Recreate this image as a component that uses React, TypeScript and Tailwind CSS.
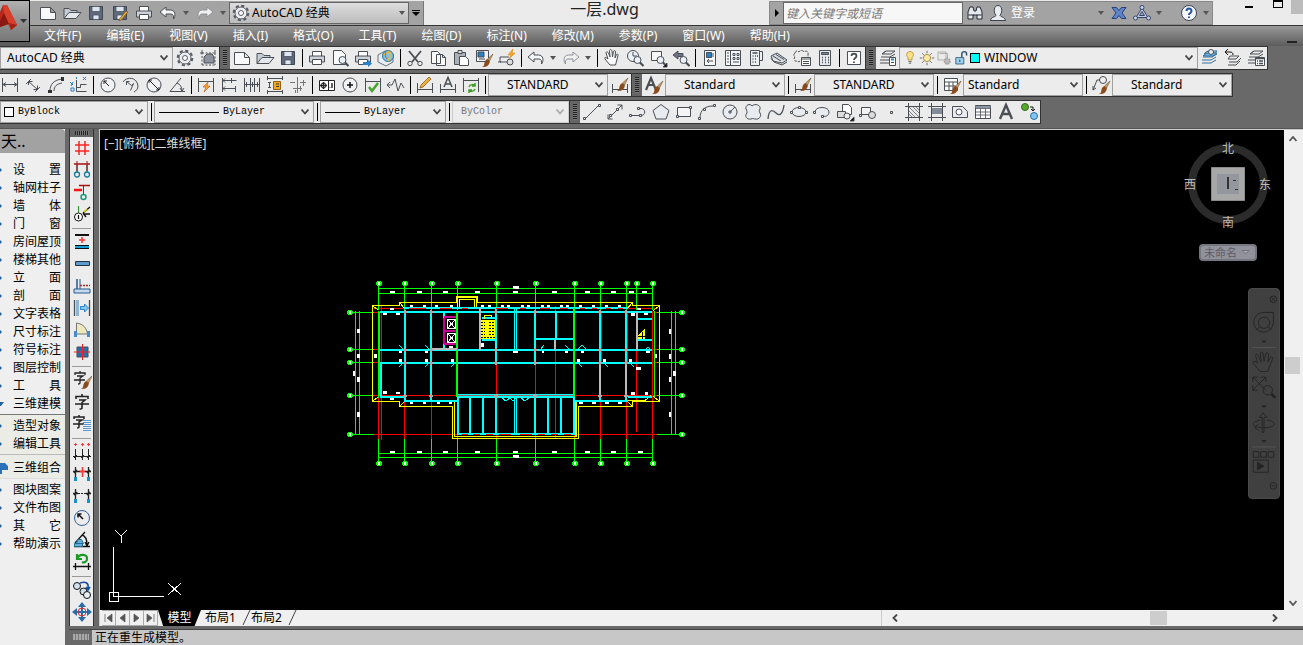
import { ReactNode } from "react";
import clsx from "clsx";

const C = "#4a4e55";
const BLUE = "#2b7fc4";

const brush = (
    <g stroke="none">
        <path d="M18 3l-5.500 5 2 2z" fill="#c9a26a" stroke="#6b5132" strokeWidth=".6" />
        <path d="M12.500 8l2.500 2.500c-1 4-3.500 6-8 5.500 2.500-1 2-2.500 2.500-4.500 .5-2 1.500-3 3-3.500z" fill="#8a4b1c" />
    </g>
);
const dims = <path d="M2.500 3v14M17.500 3v14M2.500 9.500h15M6 7.500l-3 2 3 2M14 7.500l3 2-3 2" />;
const page = <path d="M2.500 4.500h10l5 5v7h-15zM12.500 4.500v5h5" fill="#f8f9fb" />;
const folder = (
    <g>
        <path d="M2 15.500v-10h5l2 2h6v2" fill="#c5ccd6" />
        <path d="M2 15.500l5-6h12l-5 6z" fill="#e4e8ee" />
    </g>
);
const disk = (
    <g>
        <path d="M3.500 3.500h13v13h-13z" fill="#5f6b7c" stroke="#3d4654" />
        <path d="M6 3.500h8v5h-8zM7 12h6v4.500h-6z" fill="#dfe5ee" stroke="#3d4654" strokeWidth=".7" />
    </g>
);
const printer = (
    <g>
        <path d="M5.500 8v-4.500h9v4.500" fill="#fff" />
        <path d="M2.500 8h15v6h-15z" fill="#cdd1d8" />
        <path d="M5.500 11.500h9v5h-9z" fill="#fff" />
    </g>
);
const undo = <path d="M8 4l-6 5 6 5v-3h5c2 0 3 2 2.500 5 2.500-3 2-9-3-9h-4.500z" fill="#f4f5f7" />;
const redo = <path d="M12 4l6 5-6 5v-3h-5c-2 0-3 2-2.500 5-2.500-3-2-9 3-9h4.500z" fill="#f0f0f0" stroke="#8d9299" />;
const gear = (
    <g stroke="#565b63">
        <circle cx="10" cy="10" r="7.300" strokeWidth="2" strokeDasharray="3.200 2.530" />
        <circle cx="10" cy="10" r="6" fill="#eceef1" />
        <circle cx="10" cy="10" r="2.500" fill="#fff" />
    </g>
);
const layers = <path d="M5 5l3-2h9l-4 3h-9l4-3M3 9h9l5-3M2 12h9l5-3M2 15h9l5-3" fill="none" />;
const zoomLens = (
    <g>
        <circle cx="12.500" cy="12" r="3.500" fill="#eaf1f8" />
        <path d="M15 14.500l3.500 3.500" strokeWidth="2.200" />
    </g>
);

const icons: Record<string, ReactNode> = {
    new: page,
    open: folder,
    save: disk,
    saveAs: <g>{disk}<path d="M18 9l-7 8-2 1 .5-2 6.500-8z" fill="#f0b23c" stroke="#7a5418" strokeWidth=".8" /></g>,
    print: printer,
    undo,
    redo,
    gear,
    snapBox: (
        <g>
            <path d="M4 5h13M4 17V5M17 5v12M4 17h13" strokeDasharray="2 1.500" />
            <path d="M6 15V9l3-3h5l2 3v6z" fill="#8c939e" />
            <path d="M2 5h3M4 2v3M17 2v3" stroke={C} />
        </g>
    ),
    preview: <g><path d="M3.500 2.500h8l4 4v10h-12z" fill="#fafbfc" />{zoomLens}</g>,
    publish: <g>{printer}<path d="M10 14h5v-2l4 3.500-4 3.500v-2h-5z" fill={BLUE} stroke="none" /></g>,
    print3d: (
        <g>
            <path d="M2 7l7-4 8 3v8l-7 4-8-4z" fill="#e7edf2" stroke="#66717c" />
            <circle cx="12" cy="8" r="5.500" fill="#7cc3e6" stroke="#2a6f99" />
            <path d="M8 7c2-3 5-3 8-1M12 3c3 3 3 7 0 10" stroke="#f0b830" strokeWidth="1.500" />
            <path d="M10 4c-1 2-1 5 1 7" stroke="#d84b2a" />
        </g>
    ),
    cut: <g><path d="M4 3l9 11M16 3L7 14" strokeWidth="1.800" /><circle cx="5" cy="15.500" r="2.200" /><circle cx="15" cy="15.500" r="2.200" /></g>,
    copy: <path d="M3.500 3.500h6l3 3v9h-9zM8.500 6.500h6l3 3v8h-9zM14.500 6.500v3h3" fill="#fafafa" />,
    paste: <g><path d="M3.500 4.500h11v12h-11z" fill="#a9b0ba" /><path d="M7 2.500h4v3h-4z" fill="#ddd" /><path d="M8.500 8.500h6l3 3v6h-9z" fill="#fff" /></g>,
    match: <g><path d="M2.500 2.500h12v11h-12z" fill="#eef2f6" /><path d="M4 4h6v5h-6z" fill={BLUE} /><path d="M5 11h6" /><g transform="translate(1 3)">{brush}</g></g>,
    block: <g><path d="M3 9h9M3 9v5h7M1 14h3" /><circle cx="13" cy="14" r="3" fill="#ddd" /><path d="M16 1l-5 6h3l-2 4 6-6h-3z" fill="#f7a823" stroke="#d98a10" strokeWidth=".6" /></g>,
    pan: <path d="M8 17l-5-6c-1-2 1-2 3 0l-2-6c0-2 2-1 2.500 0l1.500 4-.5-6c0-2 2-2 2.500 0l.5 6 1-5.500c.5-1.500 2-1 2 .5l-.5 6 1.500-3.500c1-1 2 0 1.500 1l-2.500 9.500z" fill="#fafafa" />,
    zoomRt: <g><circle cx="8" cy="8" r="5.500" fill="#eaf1f8" /><path d="M8 4v4h4" />{zoomLens}</g>,
    zoomWin: <g><path d="M3.500 3.500h10v9h-10z" fill="#f7f7f7" />{zoomLens}<path d="M19 15v4h-4z" fill="#000" /></g>,
    zoomPrev: <g><path d="M7 3l-5 4 5 4v-2.500h5v-3h-5z" fill="#6b7280" />{zoomLens}</g>,
    props: <g><path d="M4.500 2.500h11v15h-11z" fill="#f5f7f9" /><path d="M6.500 4.500h5v5h-5z" fill={BLUE} /><path d="M7 13h6M9 11l-2 2 2 2M13 5v4" /></g>,
    dcenter: <g><path d="M2.500 2.500h15v15h-15z" fill="#f5f7f9" /><path d="M7.500 2.500v15M4 5h2M4 8h2M4 11h2M4 14h2M10 5.500h2v2h-2zM14 5.500h2v2h-2zM10 9.500h2v2h-2zM14 9.500h2v2h-2zM10 14h6" /></g>,
    palettes: <g><path d="M4.500 2.500h9v15h-9zM13.500 3.500h3v9h-3z" fill="#eceff2" /><path d="M6.500 5h5M6.500 8h1M9 8h1M11 8h1M6.500 11h1M9 11h1M6.500 14h1M9 14h1" strokeWidth="1.600" /></g>,
    sheets: <path d="M2 8l6-3 10 7-5 3-9-2zM2 10.500l3 3.500 8 3 5-3M4 8l8 5M7 6.500l8 5" fill="#d5d9e0" />,
    markup: <g><path d="M3 5c1-3 3-2 4-1 1-2 4-2 5 0 2-2 5 0 4 2v3M3 5c-2 2-1 4 0 4-2 2 0 5 2 4 1 1 2 1 3 0" strokeDasharray="3 1" /><path d="M9.500 9.500h9v8h-9z" fill="#fff" /><path d="M9.500 11h9M11 13.500h6M11 15.500h6" /></g>,
    calc: <g><path d="M4.500 2.500h11v15h-11z" fill="#e6eaee" /><path d="M6.500 4.500h7v2h-7z" fill="#7e8894" /><path d="M7 9.500h1M10 9.500h1M13 9.500h1M7 12h1M10 12h1M13 12h1M7 14.500h1M10 14.500h1M13 14.500h1" strokeWidth="1.500" /></g>,
    help: <g><path d="M3.500 3.500h13v13h-13z" fill="#fff" /><path d="M7.500 8c0-3 5-3 5 0 0 2-2.500 2-2.500 4M10 13.500v1.500" strokeWidth="1.800" /></g>,
    layerProps: <g>{layers}<path d="M11.500 9.500h6v8h-6z" fill="#fff" /><path d="M13 11.500h3" stroke={BLUE} strokeWidth="2" /><path d="M13 14.500h3" /></g>,
    layerCur: <g stroke="#356f9c">{layers}<path d="M3 8h10l4-3h-10z" fill="#6db9ea" /><circle cx="11" cy="4" r="2.500" fill="#eee" stroke={C} /></g>,
    layerPrev: <g><path d="M7 8h9l-3 3h-8zM6 14h8l4-4M5 17h8l4-4" /><path d="M2 4h5c2 0 3 1 3 3M5 1L2 4l3 3" stroke="#111" /></g>,
    layerState: <g>{layers}<path d="M9.500 9.500h9v8h-9z" fill="#fff" /><path d="M9.500 10.500h9M11 13h1M13 13h4M11 15.500h1M13 15.500h4" strokeWidth="1.300" /></g>,
    bulb: <g><path d="M10 2c5 0 5 5 2.500 7.500v3h-5v-3c-2.500-2.500-2.500-7.500 2.500-7.500z" fill="#ffe08a" stroke="#b48a2a" /><path d="M8 14.500h4M8.500 16.500h3" /></g>,
    sun: <g><path d="M10 1v3M10 16v3M1 10h3M16 10h3M4 4l2 2M14 14l2 2M16 4l-2 2M4 16l2-2" /><circle cx="10" cy="10" r="4.500" fill="#fce9a7" stroke="#9c7a2a" /></g>,
    vpFreeze: <g stroke="#a0a0a0"><path d="M2.500 2.500h10v10h-10zM4.500 4.500h10v6" /><circle cx="14" cy="14" r="3.500" fill="#bbb" strokeDasharray="2 1" strokeWidth="2" /></g>,
    unlock: <g><path d="M3.500 9.500h10v8h-10z" fill="#9ed0f0" stroke="#24506e" /><path d="M11 9V5c0-4 6-4 6 0v2" stroke="#24506e" strokeWidth="1.800" /><path d="M8.500 12v3" stroke="#123" /></g>,
    // dimension tools
    linear: dims,
    aligned: <path d="M3 9l5-5M12 17l5-5M5.500 6.500l9 8M5.500 10V6.500h4M14.500 10.500v4h-4" />,
    arcLen: <g><path d="M4 16c0-7 4-11 12-12M8 16c0-5 3-7 8-8" /><path d="M2 15h4v3h-4zM15 2h3v4h-3z" fill="#333" stroke="none" /></g>,
    ordinate: <g><path d="M7.500 5v11.500h10M7.500 12.500h4v-3h6" /><path d="M7.500 2v2M17 2l-3 3M14 2l3 3M1 7l3 3M4 7l-2 4M2 16h3v-3h-3z" stroke={BLUE} /></g>,
    radius: <g><circle cx="10" cy="10" r="7" fill="#f0f2f4" /><path d="M11 11L6 6M6 9V6h3" stroke="#222" /></g>,
    jogged: <path d="M2 7c4-6 14-5 15 4 0 3-2 5-4 6M5.500 6.500l5 4 2-2-3 7M5.500 10V6.500h3" />,
    diameter: <g><circle cx="10" cy="10" r="7" fill="#f0f2f4" /><path d="M5 5l10 10M5 8V5h3M15 12v3h-3" stroke="#222" /></g>,
    angular: <path d="M18 16.500H3L14 3M10 8c3 1 5 4 5 8M13 13l2 3 2-3" />,
    quick: <g><path d="M2.500 3v14M17.500 3v14M2.500 6.500h15" /><path d="M12 7l-5 5h3l-2 5 6-6h-3z" fill="#f7a823" stroke="#c5521c" strokeWidth=".6" /></g>,
    baseline: <path d="M3.500 3v14M12.500 3v5M16.500 11v6M3.500 5.500h14M3.500 13.500h13M6 3.500l-2 2 2 2M6 11.500l-2 2 2 2" />,
    contin: <path d="M2.500 3v14M8.500 3v14M12.500 3v14M17.500 3v14M2.500 9.500h15M4.500 7v5M10.500 7v5M15.500 7v5" />,
    spaceD: <g><path d="M2 3.500h16M2 16.500h16M2.500 1v4M17.500 1v4M2.500 15v4M17.500 15v4M4.500 7v6M3 7.500h3M3 12.500h3" /><path d="M8.500 6.500h7v8h-7z" fill="#f7a823" stroke="#946012" /><path d="M11 9h3M11 11.500h3" stroke="#333" /></g>,
    breakD: <path d="M2 7.500h5M12 7.500h6M9.500 2v16M5 13.500h9M15.500 5v6M7.500 15v3M12.500 11v5" stroke="#777" />,
    toler: <g><path d="M2.500 5.500h15v10h-15zM11.500 5.500v10" fill="#fff" stroke="#222" /><circle cx="6.500" cy="10.500" r="2.500" stroke="#222" /><path d="M3 10.500h7M6.500 7v7M15 8v5M13 13v-.5" stroke="#222" strokeWidth="1.400" /></g>,
    center: <g><circle cx="10" cy="10" r="7" fill="#f0f2f4" /><path d="M7 10h6M10 7v6" stroke="#111" strokeWidth="1.500" /></g>,
    inspect: <g><path d="M2.500 3v14M17.500 3v14M2.500 6.500h15" /><path d="M6 12l3 4 6-8" stroke="#46a32c" strokeWidth="2.500" /></g>,
    jogLine: <path d="M1 10h5M4 7L1 10l3 3M6 10l3-6 3 12 3-8 3 5" />,
    dimEdit: <g><path d="M2.500 8v10M17.500 8v10M2.500 14.500h15" /><path d="M14 2l-8 8-1 3 3-1 8-8z" fill="#f0b23c" stroke="#8a5a14" strokeWidth=".8" /></g>,
    dimText: <g><path d="M2.500 9v9M17.500 9v9M2.500 14.500h15" /><path d="M6 12L10 2.500l4 9.500M7.500 9h5" strokeWidth="1.500" /></g>,
    dimUpd: <g><path d="M2.500 3v14M17.500 3v14M2.500 5.500h15" /><path d="M8 12c1-3 5-3 6-1M14 14c-1 3-5 3-6 1M14 8v3h-3M8 18v-3h3" stroke="#3f9c27" strokeWidth="1.500" /></g>,
    dimStyle: <g><path d="M2.500 9v9M17.500 9v9M2.500 14.500h15" />{brush}</g>,
    textStyle: <g><path d="M2 15L7 3l5 12M4 10h6" strokeWidth="2.200" /><g transform="translate(1 3)">{brush}</g></g>,
    tableStyle: <g><path d="M2.500 3.500h13v12h-13zM2.500 7h13M2.500 11h13M7 7v8.500M11 7v8.500" fill="#fff" /><g transform="translate(1 3)">{brush}</g></g>,
    leader: <g><circle cx="12" cy="5" r="3.500" fill="#eee" /><path d="M9 5H6L2 15M2 11v4l3-2" /><g transform="translate(1 3)">{brush}</g></g>,
    // draw tools
    line: <g><path d="M3 17L17 3" /><path d="M1.500 15.500h2v2h-2zM16.500 2.500h2v2h-2z" fill="#eee" /></g>,
    xline: <g><path d="M3 17L17 3M12.500 3H17v4.500M3 12.500V17h4.500" /><path d="M4.500 12.500h2v2h-2zM11.500 6.500h2v2h-2z" fill="#eee" /></g>,
    pline: <g><path d="M4 13.500h9c5 0 5-7 0-7h-2" /><path d="M1.500 12.500h2v2h-2zM11.500 12.500h2v2h-2zM9.500 5.500h2v2h-2z" fill="#eee" /></g>,
    polygon: <path d="M10 2.500l8 6-3 8.500h-10l-3-8.500z" fill="#e8ebef" />,
    rect: <g><path d="M3.500 5.500h13v9h-13z" fill="#f4f4f4" /><path d="M2.500 13.500h2v2h-2zM15.500 4.500h2v2h-2z" fill="#eee" /></g>,
    arc: <g><path d="M3 16c0-8 5-12 13-12" /><path d="M1.500 15.500h2v2h-2zM6.500 6.500h2v2h-2zM16.500 2.500h2v2h-2z" fill="#eee" /></g>,
    circle: <g><circle cx="10" cy="10" r="7" fill="#e8ebef" /><path d="M10 10l5-5M9 9h2v2h-2z" /></g>,
    cloud: <path d="M9 4c-2-3-7-1-6 3 1 2 1 2 1 4-3 3 0 7 4 6 2-1 3 0 4 0 4 1 7-3 5-6-1-2-1-2 0-4 1-4-5-6-8-3z" fill="#e8ebef" />,
    spline: <path d="M2 17c1-11 5-9 8-6 4 4 7 0 8-8" strokeWidth="1.300" />,
    ellipse: <g><ellipse cx="10" cy="10" rx="7" ry="4.500" fill="#e8ebef" /><path d="M1.500 9.500h2v2h-2zM16.500 9.500h2v2h-2zM9.500 4.500h2v2h-2z" fill="#fff" /></g>,
    ellArc: <g><path d="M3 10c0-6 14-6 14 0 0 4-4 5-6 4" fill="#e8ebef" /><path d="M1.500 9.500h2v2h-2zM9.500 13.500h2v2h-2z" fill="#fff" /></g>,
    insert: <g><path d="M7.500 2.500h6l3 3v7h-9z" fill="#fff" /><path d="M2.500 9.500h8v6h-8z" fill="#ddd" /><circle cx="12" cy="14" r="3" fill="#eee" /><path d="M19 15v4h-4z" fill="#000" /></g>,
    makeBlk: <g><path d="M3.500 5.500h9v7h-9z" fill="#f4f4f4" /><circle cx="14" cy="13" r="3.500" fill="#ddd" /><path d="M1.500 12.500h2v2h-2z" fill="#eee" /></g>,
    point: <path d="M9.500 9.500h2v2h-2z" />,
    hatch: <g><path d="M4.500 1v18M15.500 1v18M1 4.500h18M1 15.500h18" /><path d="M5 9l6 6M5 5l10 10M9 5l6 6M5 12l3 3M12 5l3 3" strokeWidth=".7" /></g>,
    gradient: <g><path d="M4.500 1v18M15.500 1v18M1 4.500h18M1 15.500h18" /><path d="M5 6h10v6h-10z" fill="#838b96" stroke="none" /></g>,
    region: <g><path d="M2.500 4.500h10l5 5v6h-15z" fill="#e8ebef" /><circle cx="9" cy="10" r="3" fill="#fff" /></g>,
    table: <g><path d="M2.500 3.500h15v13h-15z" fill="#fff" /><path d="M2.500 4h15v2h-15z" fill="#8a94a2" stroke="none" /><path d="M2.500 6.500h15M2.500 10h15M2.500 13h15M7.500 7v9.500M12.500 7v9.500" strokeWidth=".8" /></g>,
    mtext: <path d="M4 17L10 3l6 14M6.500 12h7" strokeWidth="2.400" />,
    addSel: <g><circle cx="6" cy="5" r="3.500" fill="#59a832" stroke="#2e6c14" /><circle cx="15" cy="14" r="3.500" fill="#84c4f0" stroke="#2a6f99" /><path d="M11 5h3v4M12 7l2 2 2-2" stroke="#111" /></g>,
    binoc: <g><path d="M3 16V9l2-5h3l1 4h2l1-4h3l2 5v7h-5v-4h-4v4z" fill="#e6e8ea" stroke="#222b3a" /><path d="M3.500 12h5M11.500 12h5" stroke="#222b3a" /></g>,
    user: <g stroke="#39404a"><path d="M2.500 17.500c1-4 4-3 5.500-5-3-4-2-10 2-10s5 6 2 10c1.500 2 4.500 1 5.500 5z" fill="#e9ecf0" /></g>,
    exchange: <g stroke="#27407c"><path d="M3 4.500h4.500l2.500 3 2.500-3h4.500l-4 5.500 4 5.500h-4.500l-2.500-3-2.500 3h-4.500l4-5.500z" fill="#5f84c8" /></g>,
    triad: <g stroke="#33456f"><path d="M10 5l6 9.500h-12z" fill="#c5cbe0" /><path d="M10 8.500l2.500 4h-5z" fill="#a3a3a3" /><circle cx="10" cy="4.500" r="2" fill="#cdd6ea" /><circle cx="3.500" cy="15" r="2" fill="#cdd6ea" /><circle cx="16.500" cy="15" r="2" fill="#cdd6ea" /></g>,
    helpRound: <g stroke="#3c4452"><circle cx="10" cy="10" r="7.500" fill="#f5f7fa" /><path d="M7.500 8c0-3.500 5-3.500 5 0 0 2-2.500 2-2.500 4M10 13.500v1.500" stroke="#2456a8" strokeWidth="2" /></g>,
    // vertical toolbar
    grid: <path d="M7 3v14M13 3v14M3 7h14M3 13h14" stroke="#f22" strokeWidth="1.500" />,
    axis: <g><path d="M2 4h16" stroke="#a11" strokeWidth="1.500" /><path d="M5 1v10M15 1v10" stroke="#a11" /><path d="M5 5v7M15 5v7" stroke="#333" /><circle cx="5" cy="14.500" r="2.500" stroke="#167d9a" strokeWidth="1.300" /><circle cx="15" cy="14.500" r="2.500" stroke="#167d9a" strokeWidth="1.300" /></g>,
    axisAdd: <g><path d="M7 3.500h11" stroke="#a11" strokeWidth="1.500" /><path d="M2 8h8" stroke="#f11" strokeWidth="2.500" /><path d="M11.500 3v9" stroke="#a11" /><circle cx="11.500" cy="15" r="2.500" stroke="#1a9a7a" strokeWidth="1.500" /></g>,
    axisNo: <g stroke="#111"><path d="M6.500 2v7" stroke="#292" /><circle cx="6.500" cy="13" r="4" fill="#fff" /><path d="M6.500 11v4M11 9l7-6M11 10h7M11 9l3 4" strokeWidth="1.300" /><path d="M12 8l3-3" stroke="#dd0" strokeWidth="1.500" /></g>,
    wall: <g stroke="none"><path d="M3 2h14v2h-14zM3 13h14v1h-14zM3 16h14v1h-14z" fill="#111" /><path d="M3 14h14v2h-14z" fill="#19a0d8" /><path d="M10 5v6M7 8h6" stroke="#f33" strokeWidth="1.500" /></g>,
    wallBar: <path d="M3.500 7.500h14v4h-14z" fill="#5d9bd0" stroke="#234" />,
    wallJoin: <g stroke="#27588a"><path d="M5 3v10h13v4H2v-4h3zM8 3v10" fill="#c5daee" /><path d="M8 9.500h10" stroke="#b22" strokeDasharray="2 1" strokeWidth="1.500" /></g>,
    offset: <g><path d="M2.500 2v16M17.500 2v16" strokeWidth="1.300" /><path d="M4 2h3v16h-3z" fill="#8db7d5" stroke="none" /><path d="M8.500 8.500h4v-2.500l4 4-4 4v-2.500h-4z" fill="#80caf2" stroke={BLUE} /></g>,
    door: <g><path d="M4.500 14V3c7 1 10 5 11 11z" fill="#eee9bd" stroke="#777" /><path d="M2 11h3v6h-3zM15 11h3v6h-3z" fill="#4a88cc" stroke="none" /></g>,
    column: <g><path d="M5 5h11v10h-11z" fill="#286eac" /><path d="M10.500 2v16M2 10h16" stroke="#e22" /></g>,
    char: <path d="M10 2v2M4 7V4.500h12V7M7 8h6l-3 2.500V16c0 1-1 1-2.500 1M3 12h14" stroke="#222" strokeWidth="1.600" />,
    charBrush: <g stroke="#222"><path d="M8 1v2M3 5V3h10v2M5 6h6L8 8v5c0 1-1 1-2 1M2 10h11" strokeWidth="1.300" /><g transform="translate(2 3)">{brush}</g></g>,
    charList: <g stroke="#222"><path d="M7 1v2M2 5V3h10v2M4 6h6L7 8v5c0 1-1 1-2 1M1 10h11" strokeWidth="1.500" /><path d="M11 6.500h8M11 8.500h8M11 10.500h8M11 12.500h8M11 14.500h8M11 16.500h8" stroke="#5c97d4" /></g>,
    dimA: <g stroke="#222"><path d="M3.500 7v11M10.500 7v11M16.500 7v11M1 14.500h18M2 16l3-3M9 16l3-3M15 16l3-3" /><path d="M2 2.500h3M9 2.500h3M15 2.500h3M3.500 1v3M10.500 1v3M16.500 1v3" stroke="#f33" /></g>,
    dimB: <g stroke="#222"><path d="M3.500 3v10M16.500 3v10M1 7.500h18M2 9l3-3M15 9l3-3" strokeWidth="1.300" /><path d="M10.500 3v10M8 7.500h5" stroke="#f33" strokeWidth="1.500" /><path d="M2 13h3v4h-3zM15 13h3v4h-3z" fill="#1c8fc4" stroke="none" /></g>,
    dimC: <g stroke="#222"><path d="M3.500 3v10M16.500 3v10M1 7.500h5M14 7.500h5M2 9l3-3M15 9l3-3" strokeWidth="1.300" /><path d="M6 7.500h8" strokeDasharray="2 1" /><path d="M2 13h3v4h-3zM15 13h3v4h-3z" fill="#1c8fc4" stroke="none" /></g>,
    radiusV: <g><circle cx="10" cy="10" r="7.500" stroke="#2d619c" /><path d="M11 11L6 6M6 9.500V6h3.500" stroke="#111" strokeWidth="1.500" /></g>,
    angleV: <g stroke="#111"><path d="M2 16.500h16M3 13L13 2M10 5c4 1 5 4 5 10M13 12l2 4 2-4" strokeWidth="1.300" /><path d="M2.500 13.500h8v3h-8zM5.500 9.500h4l2 4h-7z" fill="#69acd0" stroke="#1c6e92" /></g>,
    turn: <g><path d="M5 2v5h5M5 7c2-6 11-5 10 0 0 3-3 4-5 3" stroke="#1a9a22" strokeWidth="2.200" /><path d="M3.500 11v7M16.500 11v7M1 14.500h18" stroke="#111" strokeWidth="1.300" /></g>,
    copyV: <g stroke="#111"><circle cx="5" cy="6" r="3.500" fill="#cfe0ef" /><circle cx="11.500" cy="11.500" r="3.500" fill="#cfe0ef" /><circle cx="15" cy="15" r="3.500" fill="#e8eef4" /><path d="M8 3c6-2 9 0 8 6M14 7l2 3 2-3" stroke="#1a4d9c" strokeWidth="1.600" /></g>,
    moveV: <g><path d="M10 2v16M2 10h16" stroke="#296cab" strokeWidth="2" /><path d="M10 0l4 5h-8zM10 20l4-5h-8zM0 10l5-4v8zM20 10l-5-4v8z" fill="#296cab" stroke="none" /><circle cx="10" cy="10" r="4" stroke="#e33" /></g>,
};

const Icon = ({ name, className = "size-5" }: { name: string; className?: string }) => (
    <svg viewBox="0 0 20 20" className={clsx("shrink-0", className)} fill="none" stroke={C} strokeWidth="1" aria-hidden="true">
        {icons[name]}
    </svg>
);

const Tool = ({ name }: { name: string }) => (
    <button aria-label={name} className="flex h-full w-[23px] shrink-0 items-center justify-center">
        <Icon name={name} />
    </button>
);

// "|" is a separator, "v" a small drop-down arrow
const Tools = ({ list }: { list: string }) => (
    <>
        {list.split(" ").map((name, i) => {
            if (name === "|") return <Sep key={i} />;
            if (name === "v") return <Caret key={i} />;
            return <Tool key={i} name={name} />;
        })}
    </>
);

const Sep = () => (
    <div className="flex w-1.5 shrink-0 justify-center py-0.5">
        <div className="w-px bg-black" />
    </div>
);

const Caret = () => (
    <button aria-label="More" className="flex w-3 shrink-0 items-center justify-center">
        <svg viewBox="0 0 6 4" className="h-1 w-1.5" fill="#555"><path d="M0 0h6l-3 4z" /></svg>
    </button>
);

const Bar = ({ grip, children }: { grip?: boolean; children: ReactNode }) => (
    <div className="flex h-6 shrink-0 items-stretch border-y border-r border-[#333] bg-[#ebebeb]">
        {grip && (
            <div className="flex w-2.5 items-center justify-center bg-[#666]">
                <div className="h-4 w-1 bg-[repeating-linear-gradient(#222_0_1px,#777_1px_2px)]" />
            </div>
        )}
        {children}
    </div>
);

interface ComboProps {
    label: string;
    value: string;
    className: string;
    selectClass?: string;
    disabled?: boolean;
    children?: ReactNode;
}

const Combo = ({ label, value, className, selectClass, disabled, children }: ComboProps) => (
    <div className={clsx("relative flex shrink-0 items-center border border-[#a0a0a0] bg-[#ececec]", className)}>
        {children}
        <select
            aria-label={label}
            disabled={disabled}
            className={clsx("h-full min-w-0 flex-1 appearance-none bg-transparent leading-5 outline-none", disabled ? "text-[#777]" : "text-black", selectClass)}
        >
            <option>{value}</option>
        </select>
        <svg viewBox="0 0 8 6" className="pointer-events-none absolute right-1 h-1.5 w-2" fill="none" stroke={disabled ? "#aaa" : "#444"} strokeWidth="1.800">
            <path d="M.5 .5l3.500 4 3.500-4" />
        </svg>
    </div>
);

const mono = "font-['Liberation_Mono','Noto_Sans_CJK_SC',monospace] text-[10px]";

const menus = ["文件(F)", "编辑(E)", "视图(V)", "插入(I)", "格式(O)", "工具(T)", "绘图(D)", "标注(N)", "修改(M)", "参数(P)", "窗口(W)", "帮助(H)"];

const TitleBar = () => (
    <header className="flex bg-[#ebebeb]">
        <div className="shrink-0 bg-[#5c5c5c]">
            <button aria-label="Application menu" className="flex h-[42px] w-[30px] items-center border border-l-0 border-black bg-gradient-to-b from-[#b0b0b0] to-[#777]">
                <svg viewBox="0 0 28 40" className="h-10 w-7">
                    <path d="M3 4h4l10 20-6 5-3-6-8 3V11z" fill="#b8261a" />
                    <path d="M3 4h4l10 20-6 5L4 12z" fill="#d8402d" />
                    <path d="M4 12l5 11-9 3v-6z" fill="#8a1a11" />
                    <path d="M9 22l8 2-6 5z" fill="#a52015" />
                    <path d="M20 18h7l-3.500 4z" fill="#333" />
                </svg>
            </button>
        </div>
        <div className="min-w-0 flex-1">
            <div className="flex h-[25px]">
                <div className="mt-px flex items-center border-r border-[#777] bg-[#a3a3a3] pl-1.5">
                    <div className="flex h-full items-center gap-px">
                        <Tools list="new open save saveAs print undo v redo v" />
                    </div>
                    <button className="flex h-[22px] w-[180px] items-center border border-[#666] bg-gradient-to-b from-[#ddd] to-[#bdbdbd] pl-px">
                        <Icon name="gear" />
                        <span className="ml-px flex-1 text-left">AutoCAD 经典</span>
                        <Caret />
                    </button>
                    <button aria-label="Customize" className="flex w-[14px] justify-center">
                        <svg viewBox="0 0 8 6" className="h-1.5 w-2"><path d="M0 0h8v1H0zM0 2h8l-4 4z" /></svg>
                    </button>
                </div>
                <h1 className="flex-1 pl-4 text-center text-base leading-[18px] text-[#222]">一层.dwg</h1>
                <div className="mt-px flex items-center border border-[#888] bg-[#a3a3a3]">
                    <button aria-label="Expand" className="flex w-[13px] justify-center">
                        <svg viewBox="0 0 4 8" className="h-2 w-1"><path d="M0 0l4 4-4 4z" /></svg>
                    </button>
                    <input aria-label="Search" placeholder="键入关键字或短语" className="h-[22px] w-[180px] border border-[#666] bg-[#f7f7f7] px-0.5 italic outline-none placeholder:text-[#777]" />
                    <Tools list="binoc user" />
                    <button className="ml-0.5 w-[84px] text-left text-white">登录</button>
                    <Caret />
                    <Tools list="exchange triad" />
                    <Caret />
                    <div className="w-3" />
                    <Tool name="helpRound" />
                    <Caret />
                </div>
                <div className="flex w-[90px] items-start justify-end">
                    <button aria-label="Minimize" className="mt-1.5 mr-5 h-0.5 w-2 bg-black" />
                    <button aria-label="Restore" className="mr-2 h-2 w-2.5 border border-t-2 border-black" />
                    <button aria-label="Close" className="h-3.5 w-3 bg-[#bcbcbc]" />
                </div>
            </div>
            <nav className="flex h-[21px] items-center gap-[25px] border-t border-[#333] bg-gradient-to-b from-[#999] to-[#5c5c5c] pl-3.5 text-white">
                {menus.map((m) => (
                    <button key={m} className="whitespace-nowrap leading-5">{m}</button>
                ))}
                <button aria-label="Minimize drawing" className="mt-3 mr-1.5 ml-auto h-0.5 w-2.5 bg-[#222]" />
            </nav>
        </div>
    </header>
);

const Toolbars = () => (
    <div className="flex flex-col gap-[3px] pb-1">
        <div className="flex">
            <Bar>
                <Combo label="Workspace" value="AutoCAD 经典" className="w-[173px]" selectClass="pl-1.5" />
                <Tools list="gear snapBox" />
            </Bar>
            <Bar grip>
                <Tools list="new open save | print preview publish print3d | cut copy paste match block | undo v redo v | pan zoomRt zoomWin zoomPrev | props dcenter palettes sheets markup calc | help" />
            </Bar>
            <Bar grip>
                <Tool name="layerProps" />
                <Combo label="Layer" value="WINDOW" className="w-[299px]" selectClass="pl-1">
                    <div className="flex gap-px pl-0.5">
                        <Icon name="bulb" className="size-4" />
                        <Icon name="sun" className="size-4" />
                        <Icon name="vpFreeze" className="size-4" />
                        <Icon name="unlock" className="size-4" />
                    </div>
                    <div className="ml-px size-2.5 border border-black bg-[#00ffff]" />
                </Combo>
                <Tools list="layerCur layerPrev layerState" />
            </Bar>
        </div>
        <div className="flex">
            <Bar>
                <div className="-ml-0.5 flex">
                    <Tools list="linear aligned arcLen ordinate | radius jogged diameter angular | quick baseline contin spaceD breakD | toler center inspect jogLine | dimEdit dimText dimUpd |" />
                </div>
                <Combo label="Dimension style" value="STANDARD" className="w-[120px]" selectClass="pl-[18px]" />
                <Tool name="dimStyle" />
            </Bar>
            <Bar grip>
                <Tool name="textStyle" />
                <Combo label="Text style" value="Standard" className="w-[120px]" selectClass="pl-[18px]" />
                <Sep />
                <Tool name="dimStyle" />
                <Combo label="Dimension style 2" value="STANDARD" className="w-[120px]" selectClass="pl-[18px]" />
                <Sep />
                <Tool name="tableStyle" />
                <Combo label="Table style" value="Standard" className="w-[120px]" selectClass="pl-1" />
                <Sep />
                <Tool name="leader" />
                <Combo label="Leader style" value="Standard" className="w-[120px]" selectClass="pl-[18px]" />
            </Bar>
        </div>
        <div className="flex">
            <Bar>
                <Combo label="Color" value="ByBlock" className="w-[148px]" selectClass={clsx(mono, "pl-1")}>
                    <div className="ml-[3px] size-2.5 border border-black bg-white" />
                </Combo>
                <Sep />
                <Combo label="Linetype" value="ByLayer" className="w-[160px]" selectClass={clsx(mono, "pl-1")}>
                    <div className="ml-1 h-px w-[60px] bg-black" />
                </Combo>
                <Sep />
                <Combo label="Lineweight" value="ByLayer" className="w-[126px]" selectClass={clsx(mono, "pl-1")}>
                    <div className="ml-1 h-px w-[35px] bg-black" />
                </Combo>
                <Sep />
                <Combo label="Plot style" value="ByColor" disabled className="w-[117px] border-[#ccc]" selectClass={clsx(mono, "pl-2")} />
            </Bar>
            <Bar grip>
                <Tools list="line xline pline polygon rect arc circle cloud spline ellipse ellArc insert makeBlk point hatch gradient region table mtext addSel" />
            </Bar>
        </div>
    </div>
);

const paletteGroups = [
    ["设　　置", "轴网柱子", "墙　　体", "门　　窗", "房间屋顶", "楼梯其他", "立　　面", "剖　　面", "文字表格", "尺寸标注", "符号标注", "图层控制", "工　　具", "三维建模"],
    ["造型对象", "编辑工具"],
    ["三维组合"],
    ["图块图案", "文件布图", "其　　它", "帮助演示"],
];

const Palette = () => (
    <aside className="w-[65px] shrink-0 overflow-hidden bg-[#efefef]">
        <div className="h-6 rounded-tr bg-[#a2a2a2] pl-px text-base leading-6 text-black">天..</div>
        <div className="pt-2">
            {paletteGroups.map((group, g) => (
                <div key={g} className={clsx("pb-px", g > 0 && "border-t pt-0.5", g === 1 && "border-[#777] bg-[#ecece6]", g === 2 && "border-[#bbb] bg-[#ecece6] pt-1", g === 3 && "border-[#ddd]")}>
                    {group.map((item) => (
                        <button key={item} className="flex h-[18px] w-full items-center whitespace-nowrap text-black">
                            <svg viewBox="0 0 13 12" className="h-3 w-[13px] shrink-0">
                                {item === "三维组合" ? (
                                    <path d="M0 1h5l3 3v4H2v4H0z" fill="#2a72b8" />
                                ) : item === "三维建模" ? (
                                    <path d="M0 4h4L1 8H0z" fill="#23609c" />
                                ) : (
                                    <path d="M0 4l2 2-2 2z" fill="#23609c" />
                                )}
                            </svg>
                            {item}
                        </button>
                    ))}
                </div>
            ))}
        </div>
    </aside>
);

const SideTools = () => (
    <div className="ml-1 flex w-[25px] shrink-0 flex-col items-center overflow-hidden border-x border-[#333] bg-[#ececec]">
        <div className="flex h-2 w-full shrink-0 items-center justify-center bg-[#666]">
            <div className="h-1 w-3.5 bg-[repeating-linear-gradient(90deg,#222_0_1px,#777_1px_2px)]" />
        </div>
        {"grid axis axisAdd axisNo | wall wallBar wallJoin offset door column | charBrush char charList | dimA dimB dimC radiusV angleV turn | copyV moveV".split(" ").map((name, i) =>
            name === "|" ? (
                <div key={i} className="flex h-1.5 w-full shrink-0 items-center px-0.5">
                    <div className="h-px w-full bg-[#999]" />
                </div>
            ) : (
                <button key={i} aria-label={name} className="flex h-[22px] shrink-0 items-center">
                    <Icon name={name} />
                </button>
            )
        )}
    </div>
);

const axesX = [378.5, 404.5, 431.5, 457.5, 496.5, 535.5, 574.5, 600.5, 626.5, 636.5, 652.5];
const axesY = [312.5, 349.5, 362.5, 395.5, 434.5];
const roomX = [390, 417, 443, 475, 513, 552, 585, 611];

const Bubble = ({ x, y }: { x: number; y: number }) => (
    <g>
        <path d={`M${x - 1.5} ${y - 2.5}h4v1h1v3h-1v1h-4v-1h-1v-3h1z`} fill="#0f0" />
        <path d={`M${x - 0.5} ${y - 1.5}h2v3h-2z`} fill="#fff" />
    </g>
);

const FloorPlan = () => (
    <svg viewBox="340 270 350 205" className="absolute top-[140px] left-60 h-[205px] w-[350px]" fill="none" shapeRendering="crispEdges">
        <g stroke="#f00">
            {axesX.map((x) => (
                <path key={x} d={`M${x} 311V${x === 636.5 ? 432 : 439}`} />
            ))}
            <path d="M381.500 306V440M555.500 306V439" />
            {axesY.map((y) => (
                <path key={y} d={`M374 ${y}H657`} />
            ))}
            <path d="M374 308.500H657" />
        </g>
        <g stroke="#0f0">
            {axesX.map((x) => (
                <path key={x} d={x === 636.5 ? `M${x} 284V310` : `M${x} 284V310M${x} 439V463`} />
            ))}
            {axesY.map((y) => (
                <path key={y} d={`M350 ${y}H374M657 ${y}H682`} />
            ))}
            <path d="M378 288.500H653M378 293.500H653M378 453.500H653M378 457.500H653M355.500 311V435M359.500 311V435M671.500 311V435M675.500 311V435" />
            <path d="M378.500 311V398M654.500 311V398" />
        </g>
        <g stroke="#ff0">
            <path d="M372.500 305.500h27v-3h57V296.500h21v6h155v3h27v96h-27v5h-54v32h-126v-32h-53v-5h-27z" />
            <path d="M457.500 307V297.500h19V307M459.500 307V299.500h15V307M399.500 302.500l5 6M372.500 305.500l6 5M632.500 302.500l-5 6M659.500 305.500l-6 5M372.500 401.500l6-5M399.500 406.500l5-5M632.500 406.500l-5-5M659.500 401.500l-6-5" />
            <path d="M454.500 402V436.500h122V402M628 400.500h17l6-5" />
        </g>
        <g stroke="#0ff" strokeWidth="2">
            <path d="M404 308H628M380 312H652M380 350H652M380 363H652M404 401H457M574 401H628M380 397H404M628 397H652" />
            <path d="M457 395H575M457 397H575M457 434H575" />
            <path d="M405 312V401M431 312V401M496 308V363M535 312V363M600 312V401M626 312V401M444 312V350M556 312V339M535 339H574M381 363V397M637 319H652M637 340H652M482 318H496M482 340H496" />
            <path d="M458 397V435M470 397V434M483 397V434M496 397V434M535 397V434M548 397V434M561 397V434M574 397V435" />
        </g>
        <path d="M514.500 308V349M516.500 308V349M514.500 397V434M516.500 397V434M399 345l5 5M425 345l5 5M399 367l5-5M425 367l5-5M451 367l5-5M541 349l3-4M565 345l4 4M578 349l4-4 4 4M578 363l4 4M604 363l4 4M630 363l4 4M502 398l4 3 4-3M510 398l3 3 3-3M521 398l4 3 4-3M645 350l3-3 3 3" stroke="#0ff" />
        <path d="M409 308.500h17M440 308.500h12M462 308.500h6M496 308.500h12M520 308.500h6M540 308.500h10M560 308.500h8M580 308.500h5M592 308.500h5M606 308.500h5M618 308.500h5M462 434.500h6M473 434.500h7M486 434.500h7M499 434.500h12M520 434.500h12M538 434.500h7M551 434.500h7M564 434.500h7" stroke="#f00" />
        <path d="M458 395.500H574" stroke="#f00" strokeOpacity=".6" />
        <g stroke="#0f0" strokeWidth="2">
            <path d="M457 312V397M574 308V397M379 312V396" />
        </g>
        <g stroke="#bbb" strokeWidth="2">
            <path d="M480 308V350M555 340V350M637 312V350M600 363V398M626 363V398M431 348.500H457" />
        </g>
        <path d="M601.500 312V362M627.500 312V362" stroke="#f00" />
        <g fill="#aaa">
            {[405, 431, 496, 535, 600, 626].map((x) =>
                [312, 350, 363, 396].map((y) => <path key={`${x}${y}`} d={`M${x - 2} ${y - 1}h4v2h-4zM${x - 1} ${y - 2}h2v4h-2z`} />)
            )}
        </g>
        <path d="M576 402V436" stroke="#ff0" strokeWidth="2" />
        <path d="M444 317h12M444 331h12M444 344h12M444 318v26" stroke="#c09" strokeWidth="2" />
        <path d="M447.500 319.500h8v9h-8zM447.500 333.500h8v9h-8zM448 320l7 8M455 320l-7 8M448 334l7 8M455 334l-7 8" stroke="#fff" />
        <path d="M481 320h14v19h-14z" fill="#ff0" />
        <path d="M481 322.500h4M489 322.500h6M481 325.500h4M489 325.500h6M481 328.500h4M489 328.500h6M481 331.500h4M489 331.500h6M481 334.500h4M489 334.500h6M481 337.500h14" stroke="#000" strokeDasharray="2 1" />
        <path d="M484.500 319V315.500h7V319" stroke="#ff0" />
        <path d="M638 339v-4l7-6v10z" fill="#ff0" />
        <path d="M638 336.500h7M642.500 332v7" stroke="#000" />
        <g fill="#fff">
            {roomX.map((x) => (
                <path key={x} d={`M${x} 291h5v2h-5zM${x} 451h5v2h-5z`} />
            ))}
            {[410, 423, 435, 450, 481, 488, 501, 507, 521, 527, 541, 547, 560, 566, 579, 592, 605, 618].map((x) => (
                <rect key={x} x={x} y="305" width="3" height="2" />
            ))}
            <path d="M513 286h6v3h-6zM513 455h6v3h-6zM642 291h5v2h-5zM638 451h5v2h-5zM629 291h5v2h-5z" />
            <path d="M357 329h3v4h-3zM357 354h3v4h-3zM353 371h2v5h-2zM357 377h3v5h-3zM357 412h3v5h-3zM669 329h2v5h-2zM669 354h2v5h-2zM673 371h3v5h-3zM669 377h2v5h-2zM669 412h2v5h-2z" />
            <path d="M383 313h4v2h-4zM396 313h4v2h-4zM390 308h4v2h-4zM374 354h3v4h-3zM399 359h3v3h-3zM425 359h3v3h-3zM451 359h3v3h-3zM383 391h4v3h-4zM396 392h4v2h-4zM390 398h4v2h-4zM410 402h3v2h-3zM423 402h3v2h-3zM437 402h3v2h-3zM449 402h3v2h-3zM579 402h4v2h-4zM592 402h4v2h-4zM605 402h4v2h-4zM618 402h4v2h-4zM631 313h4v3h-4zM644 313h4v2h-4zM637 308h4v2h-4zM577 359h3v3h-3zM603 359h3v3h-3zM629 359h3v3h-3zM636 367h5v3h-5zM631 392h4v3h-4zM645 392h3v3h-3zM655 354h2v4h-2zM399 351h3v2h-3zM425 351h3v2h-3zM513 351h5v2h-5zM542 351h2v2h-2zM565 351h3v2h-3zM581 351h3v2h-3zM646 351h4v2h-4zM481 343h3v4h-3zM449 346h4v2h-4z" />
        </g>
        {axesX.map((x) => <g key={x}><Bubble x={x} y={283.5} />{x !== 636.5 && <Bubble x={x} y={463.5} />}</g>)}
        {axesY.map((y) => <g key={y}><Bubble x={349.5} y={y} /><Bubble x={681.5} y={y} /></g>)}
    </svg>
);

const Compass = () => (
    <div className="absolute top-2 right-[11px] flex w-[90px] flex-col items-center">
        <svg viewBox="0 -4 90 100" className="h-[100px] w-[90px] text-xs" fill="#bdbdbd">
            <circle cx="45" cy="42" r="36" fill="none" stroke="#2b2b2b" strokeWidth="8" />
            <path d="M28.500 25.500h33v33h-33z" fill="#a8a8a8" stroke="#8b8b8b" />
            <path d="M34 32h22v20h-22z" fill="#94979d" />
            <path d="M44 35h2v12h-2zM50 38h3v1h-3zM52 47h3v1h-3z" fill="#333" />
            <text x="39" y="11">北</text>
            <text x="39" y="85">南</text>
            <text x="1" y="47">西</text>
            <text x="76" y="47">东</text>
        </svg>
        <button className="mt-1.5 flex h-[17px] w-[58px] items-center gap-1 rounded border-2 border-[#767681] bg-[#92929d] pl-[3px] text-[11px] leading-3 text-[#5c5c66]">
            未命名
            <svg viewBox="0 0 9 5" className="h-[5px] w-[9px]" fill="#a9a9b4" stroke="#70707b"><path d="M1 .5h7L4.500 4z" /></svg>
        </button>
    </div>
);

const NavBar = () => (
    <div className="absolute top-[158px] right-1 h-[211px] w-8 rounded border border-[#4a4a4a] bg-[#404040]">
        <svg viewBox="0 0 32 211" className="h-full w-full" fill="none" stroke="#242424" strokeWidth="1">
            <circle cx="26" cy="5" r="3.500" /><path d="M24 3l4 4M28 3l-4 4" />
            <path d="M16 19h10v11a10.500 10.500 0 1 1-10-11z" /><circle cx="16" cy="30" r="6" /><path d="M8 37l4-3M24 37l-4-3" />
            <path d="M13 49h6l-3 3zM13 118h6l-3 3zM13 155h6l-3 3z" fill="#242424" stroke="none" />
            <path d="M3 56.500h26M3 162.500h26" stroke="#555" />
            <path d="M12 82L5 74c-2-3 1-4 4-1L7 65c0-2 2-2 3 0l3 7-1-9c0-2 3-2 3 0l1 8 2-8c1-2 3-1 3 1l-1 8 3-5c1-2 3 0 2 2l-5 13z" />
            <path d="M4 88l14 14M18 88L4 102M4 93v-5h5M13 88h5v5M4 97v5h5" /><circle cx="20" cy="102" r="5" /><path d="M24 106l4 4" strokeWidth="3" />
            <path d="M14 147v-16h-3l4-5 4 5h-3v16z" /><path d="M12 134c-12 2-9 8 4 8 14 0 14-7 3-8M10 138l-4 4 5 3" />
            <path d="M4.500 167.500h6v6h-6zM12.500 167.500h6v6h-6zM20.500 167.500h6v6h-6zM4.500 176.500h16v13h-16z" /><path d="M9 179l7 4-7 4z" fill="#242424" />
            <circle cx="26" cy="204" r="3.500" /><path d="M24 204h4" />
        </svg>
    </div>
);

const Slash = () => (
    <svg viewBox="0 0 9 15" className="h-[15px] w-[9px] shrink-0" fill="none" stroke="#444"><path d="M1 15L8 0" /></svg>
);

const navPaths = ["M2 1v8M9 1L4 5l5 4z", "M8 1L3 5l5 4z", "M3 1l5 4-5 4z", "M2 1l5 4-5 4zM9 1v8"];

const ModelTabs = () => (
    <div className="flex h-4 items-stretch bg-[#f0f0f0] text-black">
        <div className="flex pl-0.5">
            {navPaths.map((d) => (
                <button key={d} aria-label="Scroll tabs" className="flex w-3.5 items-center justify-center border border-l-0 border-[#aaa]">
                    <svg viewBox="0 0 11 10" className="h-2.5 w-[11px]" fill="#555" stroke="#555" strokeWidth=".7"><path d={d} /></svg>
                </button>
            ))}
        </div>
        <button className="w-[43px] bg-black text-center leading-4 text-white [clip-path:polygon(0_0,100%_0,85%_100%,12%_100%)]">模型</button>
        <button className="pr-1.5 pl-1 leading-4">布局1</button>
        <Slash />
        <button className="pr-1.5 leading-4">布局2</button>
        <Slash />
        <div className="ml-auto flex w-[403px] items-center border-l border-[#ccc]">
            <svg viewBox="0 0 6 8" className="ml-2.5 h-2 w-1.5" fill="none" stroke="#444" strokeWidth="1.800"><path d="M5 .5L1.500 4 5 7.500" /></svg>
            <div className="mr-[105px] ml-auto h-3.5 w-[17px] bg-[#cdcdcd]" />
            <svg viewBox="0 0 6 8" className="mr-1.5 h-2 w-1.5" fill="none" stroke="#444" strokeWidth="1.800"><path d="M1 .5L4.500 4 1 7.500" /></svg>
        </div>
    </div>
);

const Chevron = ({ d }: { d: string }) => (
    <svg viewBox="0 0 8 6" className="h-1.5 w-2" fill="none" stroke="#555" strokeWidth="1.800"><path d={d} /></svg>
);

const Drawing = () => (
    <main className="ml-[5px] flex min-w-0 flex-1 border-t border-l border-[#ccc] bg-[#f0f0f0]">
        <div className="flex min-w-0 flex-1 flex-col">
            <div className="relative min-h-0 flex-1 overflow-hidden bg-black text-[#ddd]">
                <p className="px-1 pt-1 leading-5">[−][俯视][二维线框]</p>
                <FloorPlan />
                <Compass />
                <NavBar />
                <svg viewBox="0 0 80 80" className="absolute bottom-1 left-2 size-20" fill="none" stroke="#fff" shapeRendering="crispEdges">
                    <path d="M5.500 70V21M5 70.500H56M1.500 66.500h9v9h-9z" />
                    <path d="M7 4l6 6 6-6M13.500 10v7M60 57l13 12M73 57L60 69" />
                </svg>
            </div>
            <ModelTabs />
        </div>
        <div className="flex w-[19px] flex-col items-center pt-1.5 pr-0.5 pb-5">
            <Chevron d="M.5 5L4 1l3.500 4" />
            <div className="mt-auto mb-[226px] h-[17px] w-[15px] bg-[#cdcdcd]" />
            <Chevron d="M.5 1L4 5l3.500-4" />
        </div>
    </main>
);

export default function App() {
    return (
        <div className="flex h-screen min-h-[400px] flex-col overflow-hidden bg-[#696969] font-['Noto_Sans','Noto_Sans_CJK_SC',sans-serif] text-xs">
            <TitleBar />
            <Toolbars />
            <div className="flex min-h-0 flex-1 border-t border-[#555]">
                <Palette />
                <div className="flex min-w-0 flex-1 flex-col">
                    <div className="flex min-h-0 flex-1">
                        <SideTools />
                        <Drawing />
                    </div>
                    <footer className="mt-[3px] ml-1 flex h-4 shrink-0 border-t border-[#444]">
                        <div className="flex w-[23px] justify-center pt-1">
                            <div className="h-1.5 w-4 bg-[repeating-linear-gradient(90deg,#aaa_0_2px,#777_2px_3px)]" />
                        </div>
                        <p className="flex-1 bg-[#c7c7c7] pl-[3px] leading-[15px] text-black">正在重生成模型。</p>
                    </footer>
                </div>
            </div>
        </div>
    );
}
